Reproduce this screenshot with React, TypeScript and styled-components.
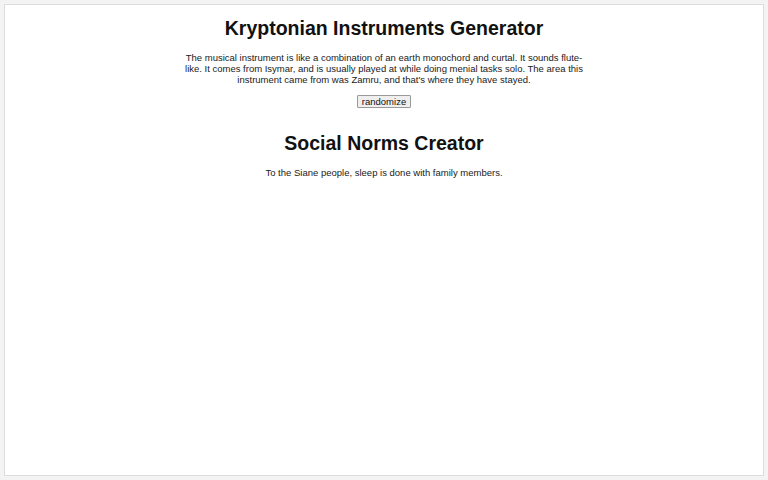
import React from "react";
import styled, { createGlobalStyle } from "styled-components";

const Global = createGlobalStyle`
  html, body { margin: 0; padding: 0; background: #f3f3f3; }
  body { padding: 4px; font-family: "Liberation Sans", Arial, sans-serif; color: #111; }
  * { box-sizing: border-box; }
`;

const Panel = styled.main`
  height: 472px;
  background: #fff;
  border: 1px solid #dcdcdc;
  display: flex;
  flex-direction: column;
  align-items: center;
  padding-top: 11px;
`;

const Section = styled.section`
  display: flex;
  flex-direction: column;
  align-items: center;
  margin-bottom: 23px;
`;

const Title = styled.h1`
  margin: 0 0 12px;
  font-size: 19.5px;
  line-height: 24px;
  font-weight: bold;
  color: #111;
`;

const Text = styled.p`
  margin: 0;
  max-width: 400px;
  font-size: 9.5px;
  line-height: 11px;
  text-align: center;
  color: #1a1a1a;
`;

const Button = styled.button`
  margin-top: 10px;
  height: 13px;
  font-family: "Liberation Sans", Arial, sans-serif;
  font-size: 9.5px;
  line-height: 11px;
  padding: 0 4px;
  background: #efefef;
  border: 1px solid #999;
  border-radius: 1px;
  color: #111;
`;

export default function App() {
  return (
    <>
      <Global />
      <Panel>
        <Section>
          <Title>Kryptonian Instruments Generator</Title>
          <Text>
            The musical instrument is like a combination of an earth monochord and curtal. It sounds flute-like. It comes from Isymar, and is usually played at while doing menial tasks solo. The area this instrument came from was Zamru, and that's where they have stayed.
          </Text>
          <Button>randomize</Button>
        </Section>
        <Section>
          <Title>Social Norms Creator</Title>
          <Text>To the Siane people, sleep is done with family members.</Text>
        </Section>
      </Panel>
    </>
  );
}
